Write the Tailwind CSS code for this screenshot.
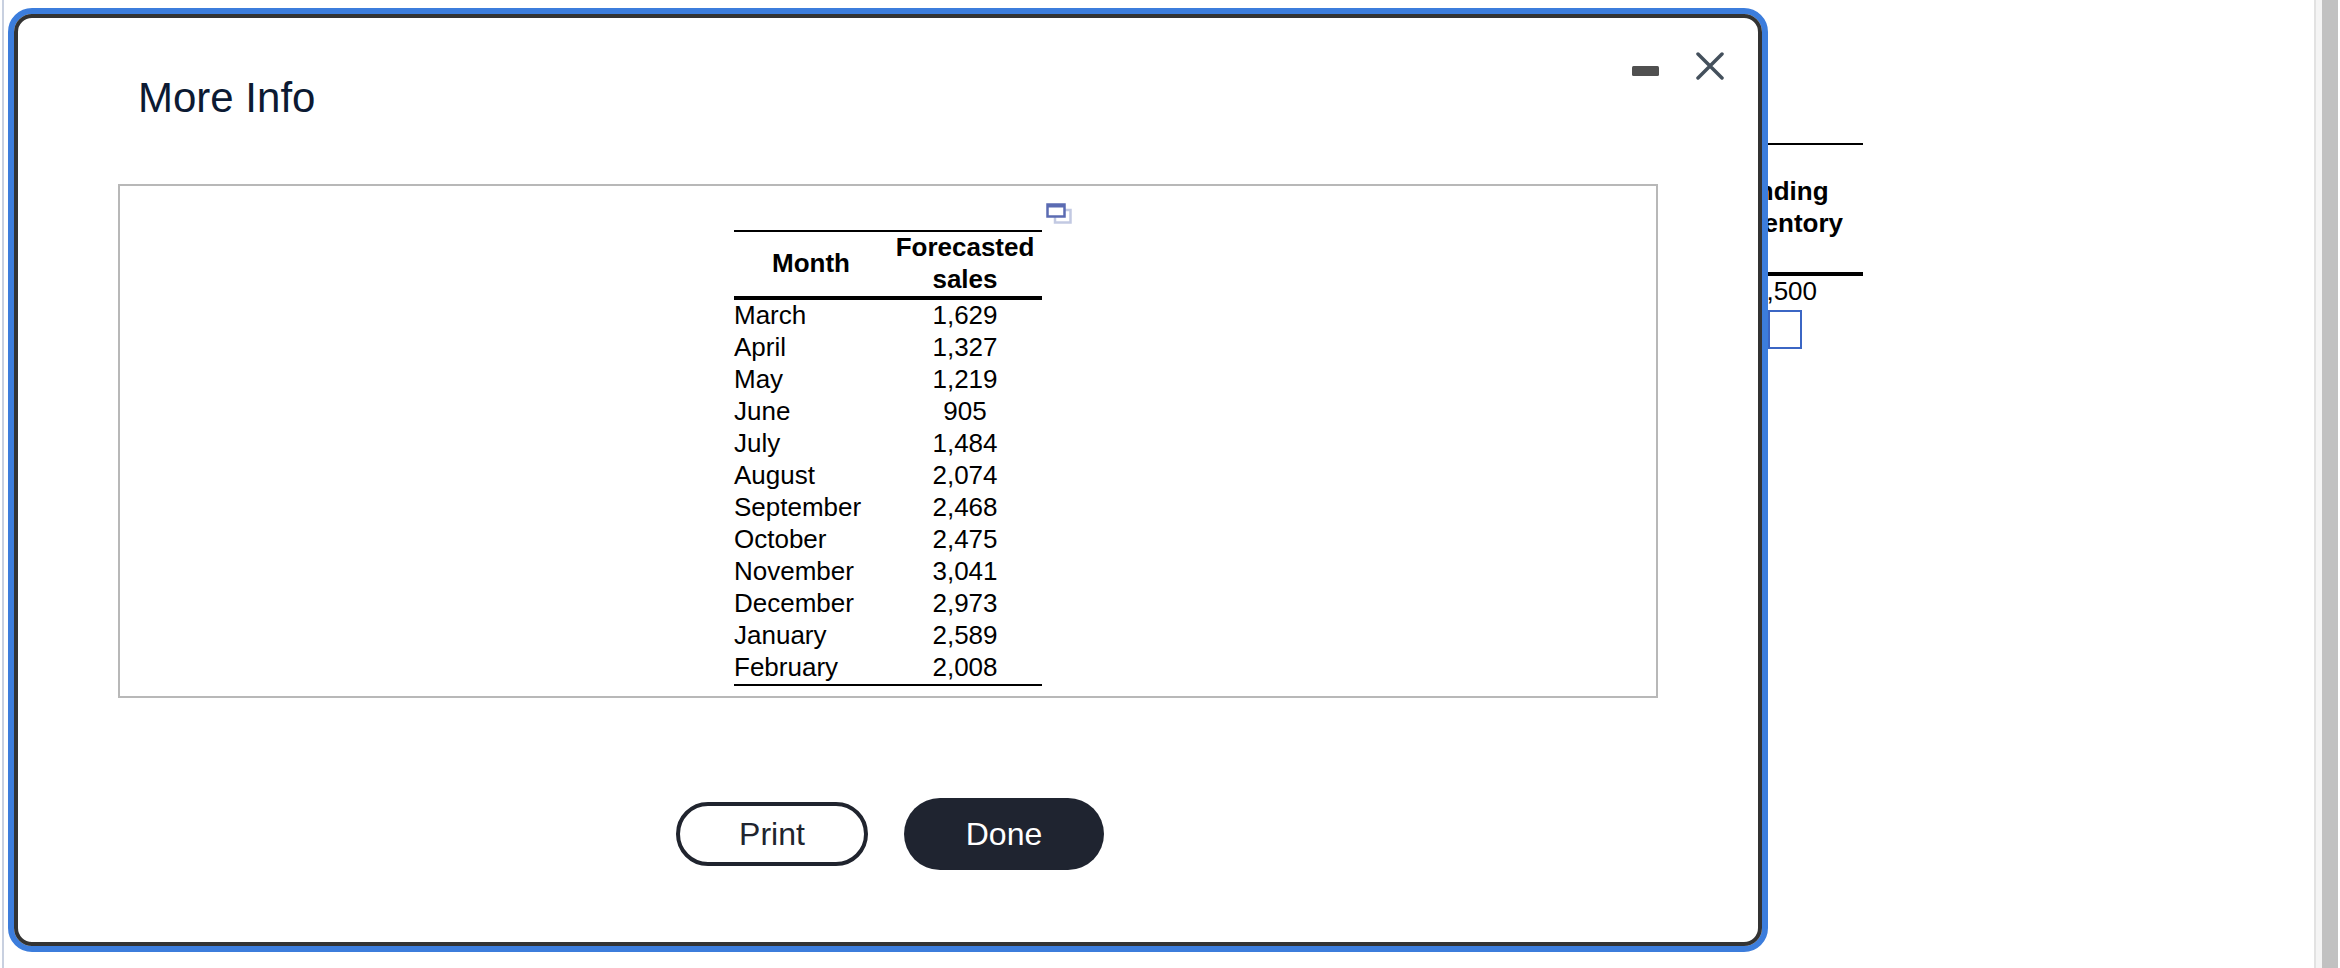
<!DOCTYPE html>
<html lang="en">
<head>
  <meta charset="UTF-8" />
  <title>More Info</title>
  <script src="https://cdn.jsdelivr.net/npm/@tailwindcss/browser@4"></script>
</head>
<body class="relative h-[968px] w-[2340px] overflow-hidden bg-white font-['Liberation_Sans',Arial,sans-serif] text-black">

  <!-- page behind the dialog -->
  <div class="flex h-full">
    <div class="ml-[2px] h-full w-[2px] bg-[#c8d0e0]"></div>
    <div class="ml-[1702px] w-[157px] pt-[143px] text-[26px] leading-[32px]">
      <div class="flex h-[133px] flex-col justify-center border-t-2 border-b-4 border-black pt-[3px] pb-[7px] text-center font-bold">
        <span>Ending</span>
        <span>inventory</span>
      </div>
      <div class="h-[32px] text-center leading-[30px]">1,500</div>
      <div class="mt-[2px] ml-[62px] h-[39px] w-[34px] border-2 border-[#3b66c4]"></div>
    </div>
    <div class="ml-auto mr-[2px] flex h-full">
      <div class="w-[2px] bg-[#e2e2e2]"></div>
      <div class="w-[6px] bg-[#f4f4f4]"></div>
      <div class="w-[16px] bg-[#c1c1c1]"></div>
    </div>
  </div>

  <!-- dialog -->
  <div class="absolute top-[8px] left-[8px] h-[944px] w-[1760px] rounded-[24px] border-[6px] border-[#3c7ddc] bg-white">
    <div class="relative h-full rounded-[18px] border-4 border-[#333333] bg-white">
      <svg class="absolute top-[48px] left-[1614px]" width="27" height="10" viewBox="0 0 27 10"><rect width="27" height="10" rx="1.5" fill="#505050"/></svg>
      <svg class="absolute top-[34px] left-[1678px]" width="28" height="28" viewBox="0 0 28 28" fill="none" stroke="#44505c" stroke-width="3.5" stroke-linecap="round"><path d="M2 2 26 26M26 2 2 26"/></svg>

      <h1 class="mt-[56px] ml-[120px] text-[42px] leading-[48px] font-normal text-[#0c1a33]">More Info</h1>

      <div class="relative mt-[62px] ml-[100px] flex h-[514px] w-[1540px] justify-center border-2 border-[#b8b8b8] pt-[44px]">
        <table class="h-fit w-[308px] border-separate border-spacing-0 text-[26px] leading-[30px]">
          <thead>
            <tr>
              <th class="w-[154px] border-t-2 border-b-4 border-black p-0 text-center"><div class="-mt-[1px] mb-[1px] leading-[32px]">Month</div></th>
              <th class="w-[154px] border-t-2 border-b-4 border-black p-0 text-center"><div class="-mt-[1px] mb-[1px] leading-[32px]">Forecasted<br />sales</div></th>
            </tr>
          </thead>
          <tbody>
            <tr class="h-[32px]"><td class="p-0 pb-[2px]">March</td><td class="p-0 pb-[2px] text-center">1,629</td></tr>
            <tr class="h-[32px]"><td class="p-0 pb-[2px]">April</td><td class="p-0 pb-[2px] text-center">1,327</td></tr>
            <tr class="h-[32px]"><td class="p-0 pb-[2px]">May</td><td class="p-0 pb-[2px] text-center">1,219</td></tr>
            <tr class="h-[32px]"><td class="p-0 pb-[2px]">June</td><td class="p-0 pb-[2px] text-center">905</td></tr>
            <tr class="h-[32px]"><td class="p-0 pb-[2px]">July</td><td class="p-0 pb-[2px] text-center">1,484</td></tr>
            <tr class="h-[32px]"><td class="p-0 pb-[2px]">August</td><td class="p-0 pb-[2px] text-center">2,074</td></tr>
            <tr class="h-[32px]"><td class="p-0 pb-[2px]">September</td><td class="p-0 pb-[2px] text-center">2,468</td></tr>
            <tr class="h-[32px]"><td class="p-0 pb-[2px]">October</td><td class="p-0 pb-[2px] text-center">2,475</td></tr>
            <tr class="h-[32px]"><td class="p-0 pb-[2px]">November</td><td class="p-0 pb-[2px] text-center">3,041</td></tr>
            <tr class="h-[32px]"><td class="p-0 pb-[2px]">December</td><td class="p-0 pb-[2px] text-center">2,973</td></tr>
            <tr class="h-[32px]"><td class="p-0 pb-[2px]">January</td><td class="p-0 pb-[2px] text-center">2,589</td></tr>
            <tr class="h-[34px]"><td class="border-b-2 border-black p-0 pb-[2px]">February</td><td class="border-b-2 border-black p-0 pb-[2px] text-center">2,008</td></tr>
          </tbody>
        </table>
        <svg class="absolute top-[17px] left-[926px]" width="26" height="21" viewBox="0 0 26 21" fill="none">
          <rect x="9" y="7" width="15.5" height="12.5" stroke="#c2c9e2" stroke-width="2.5"/>
          <rect x="1.5" y="1.5" width="17" height="12" fill="#fff" stroke="#5b6bb2" stroke-width="2.5"/>
          <rect x="1" y="1" width="18" height="3.5" fill="#5b6bb2"/>
        </svg>
      </div>

      <div class="mt-[100px] ml-[658px] flex items-center gap-[36px]">
        <button class="h-[64px] w-[192px] rounded-full border-4 border-[#20242e] bg-white text-[32px] text-[#20242e]">Print</button>
        <button class="h-[72px] w-[200px] rounded-full bg-[#1f2430] text-[32px] text-white">Done</button>
      </div>
    </div>
  </div>

</body>
</html>
